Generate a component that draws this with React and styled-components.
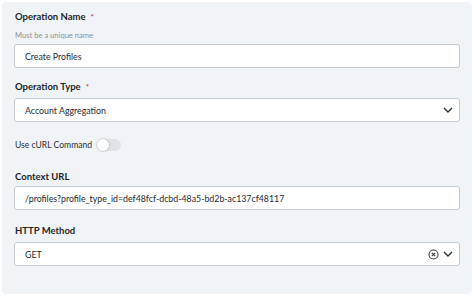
import React, { useState } from "react";
import styled, { createGlobalStyle } from "styled-components";

const GlobalStyle = createGlobalStyle`
   html, body {
      margin: 0;
      padding: 0;
      background: #ffffff;
      font-family: "Lato", "Liberation Sans", sans-serif;
   }
`;

const Panel = styled.div`
   margin: 2px;
   width: 470px;
   height: 292px;
   box-sizing: border-box;
   background: #f1f4f7;
   border-radius: 4px;
   padding: 8px 12px 0 12px;
   display: flex;
   flex-direction: column;
`;

const Field = styled.div`
   display: flex;
   flex-direction: column;
   margin-bottom: ${(p) => p.gap || 0}px;
`;

const Label = styled.label`
   font-size: 9.5px;
   font-weight: 700;
   color: #1f2429;
   line-height: 14px;
   margin-bottom: ${(p) => p.space ?? 4}px;
   padding-left: 1px;
`;

const Required = styled.span`
   color: #d63d63;
   margin-left: 5px;
   font-size: 8px;
`;

const Help = styled.div`
   font-size: 7.6px;
   color: #8d9298;
   line-height: 12px;
   margin-bottom: 3px;
   padding-left: 1px;
`;

const Box = styled.div`
   height: 24px;
   box-sizing: border-box;
   background: #ffffff;
   border: 1px solid #c6cacf;
   border-radius: 3px;
   display: flex;
   align-items: center;
   padding: 0 5px 0 10px;
   font-size: 8.8px;
   color: #262a2e;
`;

const Value = styled.span`
   flex: 1;
   white-space: nowrap;
   overflow: hidden;
`;

const Icons = styled.div`
   display: flex;
   align-items: center;
   gap: 3px;
`;

const ToggleRow = styled.div`
   display: flex;
   align-items: center;
   gap: 5px;
   font-size: 8.6px;
   color: #2b2f33;
   height: 14px;
   margin-bottom: 18px;
   padding-left: 1px;
`;

const Track = styled.button`
   width: 24px;
   height: 12px;
   border: none;
   padding: 0;
   border-radius: 6px;
   background: #dfe3e7;
   position: relative;
   cursor: pointer;
`;

const Knob = styled.span`
   position: absolute;
   top: 0;
   left: ${(p) => (p.on ? 12 : 0)}px;
   width: 12px;
   height: 12px;
   border-radius: 50%;
   background: #ffffff;
   box-shadow: 0 0 1px 1px rgba(0, 0, 0, 0.12);
`;

const Chevron = () => (
   <svg width="12" height="12" viewBox="0 0 12 12">
      <path d="M2 4 L6 8 L10 4" fill="none" stroke="#2a2e33" strokeWidth="1.3" />
   </svg>
);

const ClearIcon = () => (
   <svg width="11" height="11" viewBox="0 0 11 11">
      <circle cx="5.5" cy="5.5" r="4.5" fill="none" stroke="#3a3e43" strokeWidth="1.1" />
      <path d="M3.8 3.8 L7.2 7.2 M7.2 3.8 L3.8 7.2" stroke="#3a3e43" strokeWidth="1.1" />
   </svg>
);

const App = () => {
   const [curl, setCurl] = useState(false);

   return (
      <>
         <GlobalStyle />
         <Panel>
            <Field gap={12}>
               <Label space={5}>
                  Operation Name<Required>*</Required>
               </Label>
               <Help>Must be a unique name</Help>
               <Box>
                  <Value>Create Profiles</Value>
               </Box>
            </Field>
            <Field gap={16}>
               <Label>
                  Operation Type<Required>*</Required>
               </Label>
               <Box>
                  <Value>Account Aggregation</Value>
                  <Chevron />
               </Box>
            </Field>
            <ToggleRow>
               Use cURL Command
               <Track onClick={() => setCurl(!curl)}>
                  <Knob on={curl ? 1 : 0} />
               </Track>
            </ToggleRow>
            <Field gap={14}>
               <Label space={2}>Context URL</Label>
               <Box>
                  <Value>/profiles?profile_type_id=def48fcf-dcbd-48a5-bd2b-ac137cf48117</Value>
               </Box>
            </Field>
            <Field>
               <Label>HTTP Method</Label>
               <Box>
                  <Value>GET</Value>
                  <Icons>
                     <ClearIcon />
                     <Chevron />
                  </Icons>
               </Box>
            </Field>
         </Panel>
      </>
   );
};

export default App;
